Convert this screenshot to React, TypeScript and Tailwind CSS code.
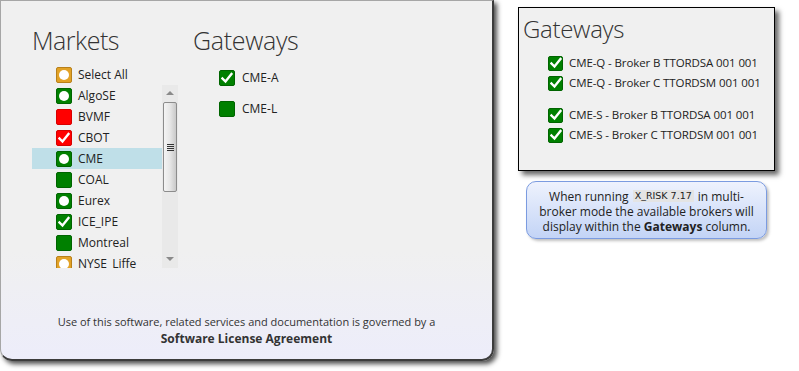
import type { ReactNode } from 'react';

type Tone = 'orange' | 'green' | 'red';
type Mark = 'dot' | 'check' | 'none';

const toneClass: Record<Tone, string> = {
  orange: 'bg-[#e2a226] border-[#b8801a]',
  green: 'bg-[#008000] border-[#006400]',
  red: 'bg-[#ff0000] border-[#d80000]',
};

function Box({ tone, mark, size = 16 }: { tone: Tone; mark: Mark; size?: number }) {
  return (
    <span
      className={`${toneClass[tone]} ${size === 16 ? 'w-[16px] h-[16px]' : 'w-[15px] h-[15px]'} shrink-0 rounded-[2px] border flex items-center justify-center`}
    >
      {mark === 'dot' && <span className="w-[10px] h-[10px] rounded-full bg-white" />}
      {mark === 'check' && (
        <svg width="12" height="12" viewBox="0 0 12 12">
          <path d="M1.5 6.5 L4.5 9.5 L10.5 2" fill="none" stroke="white" strokeWidth="2.4" strokeLinecap="square" />
        </svg>
      )}
    </span>
  );
}

const markets: { name: string; tone: Tone; mark: Mark; selected?: boolean }[] = [
  { name: 'AlgoSE', tone: 'green', mark: 'dot' },
  { name: 'BVMF', tone: 'red', mark: 'none' },
  { name: 'CBOT', tone: 'red', mark: 'check' },
  { name: 'CME', tone: 'green', mark: 'dot', selected: true },
  { name: 'COAL', tone: 'green', mark: 'none' },
  { name: 'Eurex', tone: 'green', mark: 'dot' },
  { name: 'ICE_IPE', tone: 'green', mark: 'check' },
  { name: 'Montreal', tone: 'green', mark: 'none' },
  { name: 'NYSE_Liffe', tone: 'orange', mark: 'dot' },
];

function Row({ children, selected }: { children: ReactNode; selected?: boolean }) {
  return (
    <div className={`h-[21px] flex items-center gap-[6px] pl-[24px] ${selected ? 'bg-[#bfdfe8]' : ''}`}>
      {children}
    </div>
  );
}

function Scrollbar() {
  return (
    <div className="w-[16px] h-[183px] bg-[#e9e9e9] flex flex-col items-center">
      <svg width="8" height="5" viewBox="0 0 8 5" className="mt-[5px]">
        <path d="M0 5 L4 1 L8 5 Z" fill="#8a8a8a" />
      </svg>
      <div className="mt-[7px] w-[14px] h-[90px] rounded-[2px] border border-[#8c8c8c] bg-gradient-to-r from-[#f4f4f4] via-[#e6e6e6] to-[#c9c9c9] flex flex-col items-center justify-center gap-[1px]">
        <span className="w-[7px] h-[1px] bg-[#333]" />
        <span className="w-[7px] h-[1px] bg-[#333]" />
        <span className="w-[7px] h-[1px] bg-[#333]" />
        <span className="w-[7px] h-[1px] bg-[#333]" />
      </div>
      <svg width="8" height="5" viewBox="0 0 8 5" className="mt-auto mb-[6px]">
        <path d="M0 0 L8 0 L4 4 Z" fill="#8a8a8a" />
      </svg>
    </div>
  );
}

const brokers = [
  ['CME-Q - Broker B TTORDSA 001 001', 'CME-Q - Broker C TTORDSM 001 001'],
  ['CME-S - Broker B TTORDSA 001 001', 'CME-S - Broker C TTORDSM 001 001'],
];

export default function App() {
  return (
    <div className="w-[799px] h-[371px] bg-white flex items-start text-[#222] font-['Open_Sans','Noto_Sans',sans-serif] text-[12px]">
      {/* Main window */}
      <div className="w-[494px] h-[361px] border-l border-t border-[#a6a6a6] border-r-[2px] border-b-[2px] border-r-[#3c3c3c] border-b-[#3c3c3c] rounded-b-[12px] shadow-[3px_3px_5px_rgba(0,0,0,0.7)] bg-gradient-to-b from-[#f0f0f0] from-70% to-[#ededfa] flex flex-col">
        <div className="flex pl-[31px] pt-[20px]">
          {/* Markets */}
          <div className="w-[161px]">
            <h1 className="text-[25px] font-light leading-[38px] text-[#333] tracking-[-0.5px]">Markets</h1>
            <div className="mt-[5px]">
              <div className="w-[146px]">
                <Row>
                  <Box tone="orange" mark="dot" />
                  <span>Select All</span>
                </Row>
              </div>
              <div className="flex">
                <div className="w-[130px] h-[183px] overflow-hidden">
                  {markets.map((m) => (
                    <Row key={m.name} selected={m.selected}>
                      <Box tone={m.tone} mark={m.mark} />
                      <span>{m.name}</span>
                    </Row>
                  ))}
                </div>
                <Scrollbar />
              </div>
            </div>
          </div>
          {/* Gateways */}
          <div>
            <h1 className="text-[25px] font-light leading-[38px] text-[#333] tracking-[-0.3px]">Gateways</h1>
            <div className="mt-[10px] pl-[26px] flex flex-col gap-[13px]">
              <div className="flex items-center gap-[7px]">
                <Box tone="green" mark="check" />
                <span>CME-A</span>
              </div>
              <div className="flex items-center gap-[7px]">
                <Box tone="green" mark="none" />
                <span>CME-L</span>
              </div>
            </div>
          </div>
        </div>
        <div className="mt-auto pb-[12px] text-center text-[#333]">
          <p className="text-[11px] leading-[17px]">Use of this software, related services and documentation is governed by a</p>
          <p className="text-[12px] leading-[17px] font-bold">Software License Agreement</p>
        </div>
      </div>

      {/* Right side */}
      <div className="ml-[24px] mt-[7px] flex flex-col items-start">
        <div className="w-[257px] h-[164px] border border-black bg-[#f0f0f0] shadow-[4px_4px_5px_rgba(0,0,0,0.6)] pl-[4px] pt-[6px]">
          <h2 className="text-[24px] font-light leading-[30px] text-[#333] tracking-[-0.3px]">Gateways</h2>
          <div className="mt-[9px] pl-[25px] flex flex-col gap-[12px]">
            {brokers.map((group, i) => (
              <div key={i} className="flex flex-col">
                {group.map((b) => (
                  <div key={b} className="h-[20px] flex items-center gap-[6px] text-[11.5px] tracking-[-0.1px]">
                    <Box tone="green" mark="check" size={15} />
                    <span>{b}</span>
                  </div>
                ))}
              </div>
            ))}
          </div>
        </div>
        <div className="ml-[8px] mt-[10px] w-[241px] h-[58px] pt-[2px] rounded-[10px] border border-[#7b9be0] bg-gradient-to-b from-[#eef2fd] to-[#c3d4f6] shadow-[2px_2px_3px_rgba(0,0,0,0.25)] flex flex-col items-center justify-center text-[12px] leading-[15px] text-[#222]">
          <div className="h-[15px] flex items-center gap-[4px]">
            <span>When running</span>
            <span className="inline-block text-[9.5px] leading-[12px] bg-[#e4e4e4] px-[2px] font-['DejaVu_Sans',sans-serif]">X_RISK 7.17</span>
            <span>in multi-</span>
          </div>
          <p className="h-[15px]">broker mode the available brokers will</p>
          <p className="h-[15px]">
            display within the <span className="font-bold">Gateways</span> column.
          </p>
        </div>
      </div>
    </div>
  );
}
